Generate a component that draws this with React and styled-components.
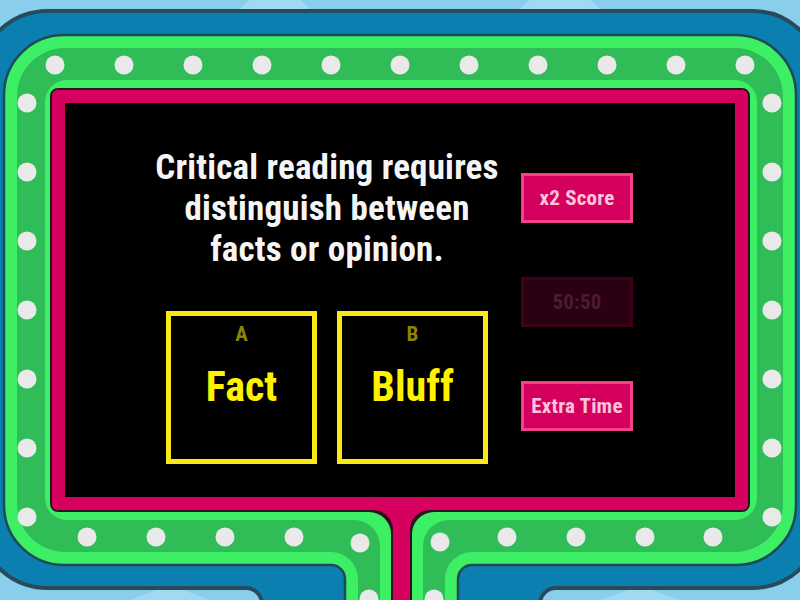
import React from "react";
import styled, { createGlobalStyle } from "styled-components";

const GlobalStyle = createGlobalStyle`
  html, body {
    margin: 0;
    padding: 0;
    background: #89cfec;
  }
  * {
    box-sizing: border-box;
  }
`;

const FONT = `"Roboto Condensed", "Liberation Sans Narrow", "DejaVu Sans Condensed", sans-serif`;

// rounded rect with a stem going down from the middle of its bottom edge
const tShape = (x1, y1, x2, y2, R, sx1, sx2, f, bottom = 620) =>
  `M${x1 + R},${y1} H${x2 - R} A${R},${R} 0 0 1 ${x2},${y1 + R} V${y2 - R} A${R},${R} 0 0 1 ${x2 - R},${y2} ` +
  `H${sx2 + f} A${f},${f} 0 0 0 ${sx2},${y2 + f} V${bottom} H${sx1} V${y2 + f} A${f},${f} 0 0 0 ${sx1 - f},${y2} ` +
  `H${x1 + R} A${R},${R} 0 0 1 ${x1},${y2 - R} V${y1 + R} A${R},${R} 0 0 1 ${x1 + R},${y1} Z`;

const BRIGHT = "#3cef65";
const DARK_GREEN = "#30bd57";
const PINK = "#d6005f";

const topDots = Array.from({ length: 11 }, (_, i) => [55 + i * 69, 65]);
const sideDots = Array.from({ length: 7 }, (_, i) => 103 + i * 69);
const bottomDots = [
  [87, 537], [156, 537], [225, 537], [294, 537], [360, 543],
  [440, 542], [507, 537], [576, 537], [645, 537], [713, 537],
  [369, 599], [434, 599],
];

const Frame = () => (
  <FrameSvg viewBox="0 0 800 600" width="800" height="600">
    <rect x="0" y="0" width="800" height="600" fill="#89cfec" />
    <g fill="#a0daf2">
      <polygon points="70,0 100,-30 130,0" />
      <polygon points="240,9 275,-25 310,9" />
      <polygon points="520,9 560,-30 600,9" />
      <polygon points="130,600 170,585 210,600" />
      <polygon points="600,600 640,586 680,600" />
    </g>
    <path d={tShape(-22, 11, 822, 588, 70, 262, 540, 16)} fill="#0b80b0" stroke="#274a5c" strokeWidth="4" />
    <path d={tShape(4, 35, 796, 565, 60, 345, 458, 14)} fill={BRIGHT} stroke="#1d4a58" strokeWidth="2.5" />
    <path d={tShape(17, 48, 783, 552, 48, 358, 445, 27)} fill={DARK_GREEN} />
    <path d={tShape(45, 80, 757, 520, 22, 380, 423, 26)} fill={BRIGHT} />
    <path d={tShape(50, 88, 750, 512, 8, 391, 412, 22)} fill="#2a1420" />
    <path d={tShape(52, 90, 748, 510, 6, 393, 410, 20)} fill={PINK} />
    <g fill="#e9e9e9">
      {topDots.map(([x, y]) => (
        <circle key={`t${x}`} cx={x} cy={y} r="9.5" />
      ))}
      {sideDots.map((y) => (
        <circle key={`l${y}`} cx="27" cy={y} r="9.5" />
      ))}
      {sideDots.map((y) => (
        <circle key={`r${y}`} cx="772" cy={y} r="9.5" />
      ))}
      {bottomDots.map(([x, y]) => (
        <circle key={`b${x}-${y}`} cx={x} cy={y} r="9.5" />
      ))}
    </g>
  </FrameSvg>
);

const Stage = styled.div`
  position: relative;
  width: 800px;
  height: 600px;
  overflow: hidden;
  font-family: ${FONT};
`;

const FrameSvg = styled.svg`
  position: absolute;
  inset: 0;
  display: block;
`;

const Content = styled.div`
  position: relative;
  padding: 90px 52px 0 52px;
`;

const Board = styled.div`
  width: 696px;
  height: 420px;
  padding: 13px;
  background: ${PINK};
  border-radius: 6px;
`;

const Screen = styled.div`
  width: 100%;
  height: 100%;
  background: #000;
  display: grid;
  grid-template-columns: 364px 112px;
  column-gap: 12px;
  padding-left: 80px;
`;

const QuestionColumn = styled.div`
  display: flex;
  flex-direction: column;
  align-items: center;
`;

const Question = styled.h1`
  margin: 44px 0 0 0;
  font-family: ${FONT};
  font-weight: 700;
  font-size: 35px;
  line-height: 41px;
  letter-spacing: 0.2px;
  color: #f5f5f5;
  text-align: center;
  white-space: nowrap;
`;

const Answers = styled.div`
  display: flex;
  gap: 20px;
  margin-top: 41px;
`;

const AnswerBox = styled.div`
  width: 151px;
  height: 153px;
  border: 5px solid #f9e814;
  display: flex;
  flex-direction: column;
  align-items: center;
`;

const AnswerLetter = styled.div`
  margin-top: 6px;
  font-size: 21px;
  line-height: 24px;
  font-weight: 700;
  color: #8d8400;
`;

const AnswerText = styled.div`
  margin-top: 17px;
  font-size: 42px;
  line-height: 48px;
  font-weight: 700;
  color: #fff200;
`;

const PowerUps = styled.div`
  display: flex;
  flex-direction: column;
  gap: 54px;
  padding-top: 70px;
`;

const PowerUp = styled.div`
  height: 50px;
  display: flex;
  align-items: center;
  justify-content: center;
  border: 3px solid ${(p) => (p.$disabled ? "#3b0219" : "#f2428a")};
  background: ${(p) => (p.$disabled ? "#2a0112" : "#d5005d")};
  color: ${(p) => (p.$disabled ? "#4d1b2e" : "#ffc3dc")};
  font-size: 21px;
  font-weight: 700;
  letter-spacing: 0.2px;
  white-space: nowrap;
`;

export default function App() {
  return (
    <>
      <GlobalStyle />
      <Stage>
        <Frame />
        <Content>
          <Board>
            <Screen>
              <QuestionColumn>
                <Question>
                  Critical reading requires
                  <br />
                  distinguish between
                  <br />
                  facts or opinion.
                </Question>
                <Answers>
                  <AnswerBox>
                    <AnswerLetter>A</AnswerLetter>
                    <AnswerText>Fact</AnswerText>
                  </AnswerBox>
                  <AnswerBox>
                    <AnswerLetter>B</AnswerLetter>
                    <AnswerText>Bluff</AnswerText>
                  </AnswerBox>
                </Answers>
              </QuestionColumn>
              <PowerUps>
                <PowerUp>x2 Score</PowerUp>
                <PowerUp $disabled>50:50</PowerUp>
                <PowerUp>Extra Time</PowerUp>
              </PowerUps>
            </Screen>
          </Board>
        </Content>
      </Stage>
    </>
  );
}
